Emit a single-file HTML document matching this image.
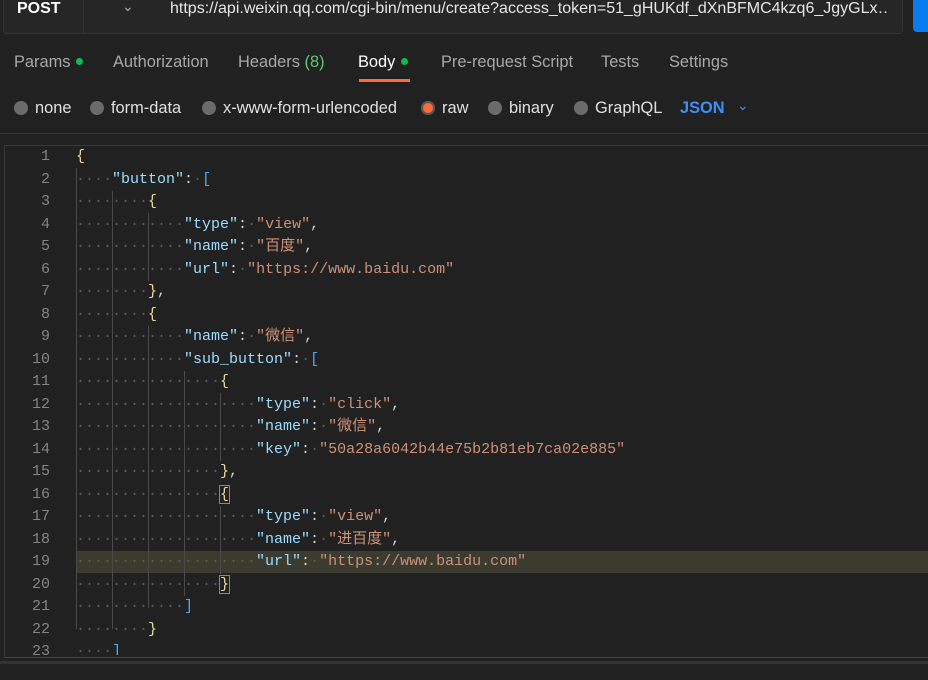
<html><head><style>
body{margin:0;width:928px;height:680px;background:#212121;overflow:hidden;font-family:"Liberation Sans",sans-serif;position:relative}
.a{position:absolute}
.tab{position:absolute;top:53px;font-size:16.4px;color:#a8a8a8}
.dot{display:inline-block;width:7px;height:7px;border-radius:50%;background:#0cbb52;margin-left:6px;vertical-align:2px}
.r{position:absolute;top:99px;font-size:16.4px;color:#e0e0e0;white-space:nowrap}
.rc{display:inline-block;width:14px;height:14px;border-radius:50%;background:#6b6b6b;vertical-align:-2px;margin-right:7px}
.code{position:absolute;left:0;top:146px;font-family:"Liberation Mono","Noto Sans CJK SC",monospace;font-size:15px}
.l{position:absolute;left:76px;height:22.5px;line-height:22.5px;white-space:pre;color:#d4d4d4}
.n{position:absolute;width:50px;text-align:right;color:#858585;height:22.5px;line-height:22.5px}
.s{color:#5a5a5a}.k{color:#9cdcfe}.v{color:#ce9178}.b{color:#e8d9a0}
.g{position:absolute;width:1px;background:#4a4a4a}
</style></head><body>
<div class="a" style="left:3px;top:-4px;width:898px;height:36px;border:1px solid #333;border-radius:4px;background:#262626"></div>
<div class="a" style="left:83px;top:-4px;width:1px;height:37px;background:#333"></div>
<div class="a" style="left:17px;top:0px;font-size:16px;font-weight:bold;color:#fff">POST</div>
<div class="a" style="left:122px;top:-2px;font-size:14px;color:#aaa">⌄</div>
<div class="a" style="left:170px;top:0px;font-size:16px;color:#e6e6e6;white-space:nowrap;width:718px;overflow:hidden">https://api.weixin.qq.com/cgi-bin/menu/create?access_token=51_gHUKdf_dXnBFMC4kzq6_JgyGLx…</div>
<div class="a" style="left:913px;top:-4px;width:20px;height:36px;background:#097bed;border-radius:4px"></div>
<div class="tab" style="left:14px">Params<span class="dot"></span></div>
<div class="tab" style="left:113px">Authorization</div>
<div class="tab" style="left:238px">Headers <span style="color:#5fc77a">(8)</span></div>
<div class="tab" style="left:358px;color:#fff">Body<span class="dot"></span></div>
<div class="a" style="left:359px;top:79px;width:51px;height:3px;background:#ff6c37"></div>
<div class="tab" style="left:441px">Pre-request Script</div>
<div class="tab" style="left:601px">Tests</div>
<div class="tab" style="left:669px">Settings</div>
<div class="r" style="left:14px"><span class="rc"></span>none</div>
<div class="r" style="left:90px"><span class="rc"></span>form-data</div>
<div class="r" style="left:202px"><span class="rc"></span>x-www-form-urlencoded</div>
<div class="r" style="left:421px"><span class="rc" style="background:#ff6c37;box-shadow:0 0 0 2px #555 inset"></span>raw</div>
<div class="r" style="left:488px"><span class="rc"></span>binary</div>
<div class="r" style="left:574px"><span class="rc"></span>GraphQL</div>
<div class="r" style="left:680px;color:#3d8ef7;font-weight:bold">JSON</div>
<div class="a" style="left:737px;top:97px;font-size:14px;color:#3d8ef7">⌄</div>
<div class="a" style="left:0;top:133px;width:928px;height:1px;background:#333"></div>
<div class="a" style="left:4px;top:145px;width:924px;height:511px;border-top:1px solid #3a3a3a;border-left:1px solid #3a3a3a;border-bottom:1px solid #444"></div>
<div class="a" style="left:76px;top:551px;width:852px;height:22px;background:#3b3b30"></div>
<div class="a" style="left:0;top:661px;width:928px;height:3px;background:#333"></div>
<div class="code">
<div class="g" style="left:76px;top:22px;height:461px"></div>
<div class="g" style="left:112px;top:45px;height:438px"></div>
<div class="g" style="left:148px;top:67px;height:68px"></div>
<div class="g" style="left:148px;top:180px;height:282px"></div>
<div class="g" style="left:184px;top:225px;height:225px"></div>
<div class="g" style="left:220px;top:247px;height:68px"></div>
<div class="g" style="left:220px;top:360px;height:68px"></div>
<div class="n" style="top:0">1</div><div class="l" style="top:0"><span class="b">{</span></div>
<div class="n" style="top:22.5px">2</div><div class="l" style="top:22.5px"><span class="s">····</span><span class="k">"button"</span>:<span class="s">·</span><span style="color:#4fa8f0">[</span></div>
<div class="n" style="top:45px">3</div><div class="l" style="top:45px"><span class="s">········</span><span class="b">{</span></div>
<div class="n" style="top:67.5px">4</div><div class="l" style="top:67.5px"><span class="s">············</span><span class="k">"type"</span>:<span class="s">·</span><span class="v">"view"</span>,</div>
<div class="n" style="top:90px">5</div><div class="l" style="top:90px"><span class="s">············</span><span class="k">"name"</span>:<span class="s">·</span><span class="v">"百度"</span>,</div>
<div class="n" style="top:112.5px">6</div><div class="l" style="top:112.5px"><span class="s">············</span><span class="k">"url"</span>:<span class="s">·</span><span class="v">"https://www.baidu.com"</span></div>
<div class="n" style="top:135px">7</div><div class="l" style="top:135px"><span class="s">········</span><span class="b">}</span>,</div>
<div class="n" style="top:157.5px">8</div><div class="l" style="top:157.5px"><span class="s">········</span><span class="b">{</span></div>
<div class="n" style="top:180px">9</div><div class="l" style="top:180px"><span class="s">············</span><span class="k">"name"</span>:<span class="s">·</span><span class="v">"微信"</span>,</div>
<div class="n" style="top:202.5px">10</div><div class="l" style="top:202.5px"><span class="s">············</span><span class="k">"sub_button"</span>:<span class="s">·</span><span style="color:#4fa8f0">[</span></div>
<div class="n" style="top:225px">11</div><div class="l" style="top:225px"><span class="s">················</span><span class="b">{</span></div>
<div class="n" style="top:247.5px">12</div><div class="l" style="top:247.5px"><span class="s">····················</span><span class="k">"type"</span>:<span class="s">·</span><span class="v">"click"</span>,</div>
<div class="n" style="top:270px">13</div><div class="l" style="top:270px"><span class="s">····················</span><span class="k">"name"</span>:<span class="s">·</span><span class="v">"微信"</span>,</div>
<div class="n" style="top:292.5px">14</div><div class="l" style="top:292.5px"><span class="s">····················</span><span class="k">"key"</span>:<span class="s">·</span><span class="v">"50a28a6042b44e75b2b81eb7ca02e885"</span></div>
<div class="n" style="top:315px">15</div><div class="l" style="top:315px"><span class="s">················</span><span class="b">}</span>,</div>
<div class="n" style="top:337.5px">16</div><div class="l" style="top:337.5px"><span class="s">················</span><span class="b" style="outline:1px solid #888">{</span></div>
<div class="n" style="top:360px">17</div><div class="l" style="top:360px"><span class="s">····················</span><span class="k">"type"</span>:<span class="s">·</span><span class="v">"view"</span>,</div>
<div class="n" style="top:382.5px">18</div><div class="l" style="top:382.5px"><span class="s">····················</span><span class="k">"name"</span>:<span class="s">·</span><span class="v">"进百度"</span>,</div>
<div class="n" style="top:405px">19</div><div class="l" style="top:405px"><span class="s">····················</span><span class="k">"url"</span>:<span class="s">·</span><span class="v">"https://www.baidu.com"</span></div>
<div class="n" style="top:427.5px">20</div><div class="l" style="top:427.5px"><span class="s">················</span><span class="b" style="outline:1px solid #888">}</span></div>
<div class="n" style="top:450px">21</div><div class="l" style="top:450px"><span class="s">············</span><span style="color:#4fa8f0">]</span></div>
<div class="n" style="top:472.5px">22</div><div class="l" style="top:472.5px"><span class="s">········</span><span class="b">}</span></div>
<div class="n" style="top:495px;height:14px;overflow:hidden">23</div><div class="l" style="top:495px;height:14px;overflow:hidden"><span class="s">····</span><span style="color:#4fa8f0">]</span></div>
</div>
</body></html>
